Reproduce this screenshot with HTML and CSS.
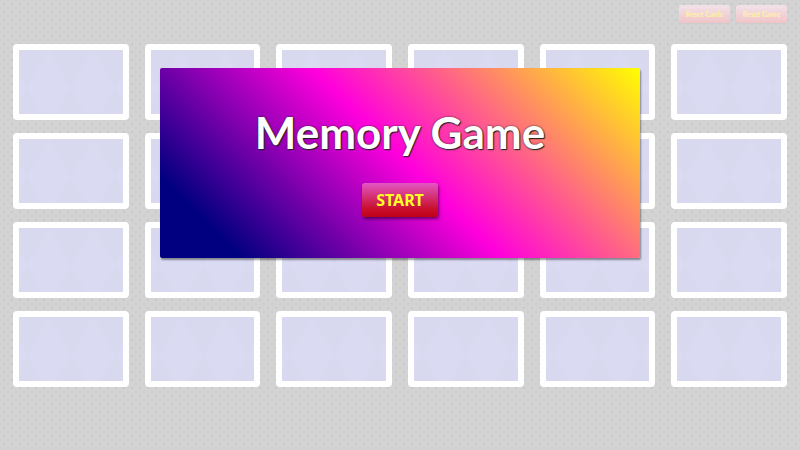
FILE: index.html
```html
<!DOCTYPE html>
<html lang="en">
<head>
<meta charset="utf-8">
<title>Memory Game</title>
<link rel="stylesheet" href="styles.css">
</head>
<body>
<header class="toolbar">
<button class="btn btn-small" type="button" disabled>Reset Cards</button>
<button class="btn btn-small" type="button" disabled>Reset Game</button>
</header>
<main class="board">
<div class="card"></div><div class="card"></div><div class="card"></div><div class="card"></div><div class="card"></div><div class="card"></div>
<div class="card"></div><div class="card"></div><div class="card"></div><div class="card"></div><div class="card"></div><div class="card"></div>
<div class="card"></div><div class="card"></div><div class="card"></div><div class="card"></div><div class="card"></div><div class="card"></div>
<div class="card"></div><div class="card"></div><div class="card"></div><div class="card"></div><div class="card"></div><div class="card"></div>
</main>
<section class="dialog" role="dialog" aria-labelledby="title">
<h1 class="title" id="title">Memory Game</h1>
<button class="btn btn-start" type="button">START</button>
</section>
</body>
</html>
```
FILE: styles.css
```css
* { box-sizing: border-box; }
body {
  margin: 0;
  min-height: 100vh;
  font-family: "Noto Sans", sans-serif;
  background-color: #d3d3d3;
  background-image:
    radial-gradient(circle, #c8c9ca 1px, transparent 1px),
    radial-gradient(circle, #cccdce 1px, transparent 1px);
  background-size: 8px 8px;
  background-position: 0 0, 4px 4px;
}
.toolbar {
  display: flex;
  justify-content: flex-end;
  gap: 6px;
  padding: 5px 13px 0;
}
.btn {
  border: 0;
  border-radius: 3px;
  color: #ff2;
  background: linear-gradient(#e356c4, #c8102e 75%, #c00018);
  font-family: inherit;
  font-weight: 700;
}
.btn-small {
  width: 51px;
  height: 18px;
  padding: 0;
  font-family: Lato, sans-serif;
  font-size: 7px;
  white-space: nowrap;
  color: #fff3a0;
  background: linear-gradient(#f2e2ea, #f0c4c7);
  box-shadow: 0 1px 1px #ccc;
}
.board {
  display: grid;
  grid-template-columns: repeat(6, 1fr);
  gap: 13px 16px;
  padding: 21px 13px;
}
.card {
  height: 76px;
  border: 6px solid #fff;
  border-radius: 4px;
  background:
    linear-gradient(60deg, #d6d7ec88 25%, transparent 25% 75%, #d6d7ec88 75%) 8px 0 / 44px 76px,
    linear-gradient(120deg, #d6d7ec88 25%, transparent 25% 75%, #d6d7ec88 75%) 8px 0 / 44px 76px,
    #dadbf3;
  background-clip: padding-box;
}
.dialog {
  position: absolute;
  top: 15vh;
  left: 20%;
  width: 60%;
  padding: 32px 0 41px;
  border-radius: 2px;
  text-align: center;
  background: linear-gradient(45deg, #000080 12%, #ff00dc 51%, #ffff00 100%);
  box-shadow: 1px 2px 2px rgba(0, 0, 0, .4);
}
.title {
  margin: 0 0 19px;
  font-family: Lato, sans-serif;
  font-size: 44px;
  line-height: 64px;
  color: #fff;
  text-shadow: 1px 1px 1px #222, 0 0 2px #222;
}
.btn-start {
  display: block;
  margin: 0 auto;
  width: 76px;
  height: 34px;
  padding: 0;
  font-size: 16px;
  box-shadow: 1px 2px 3px rgba(0, 0, 0, .5);
}
```
